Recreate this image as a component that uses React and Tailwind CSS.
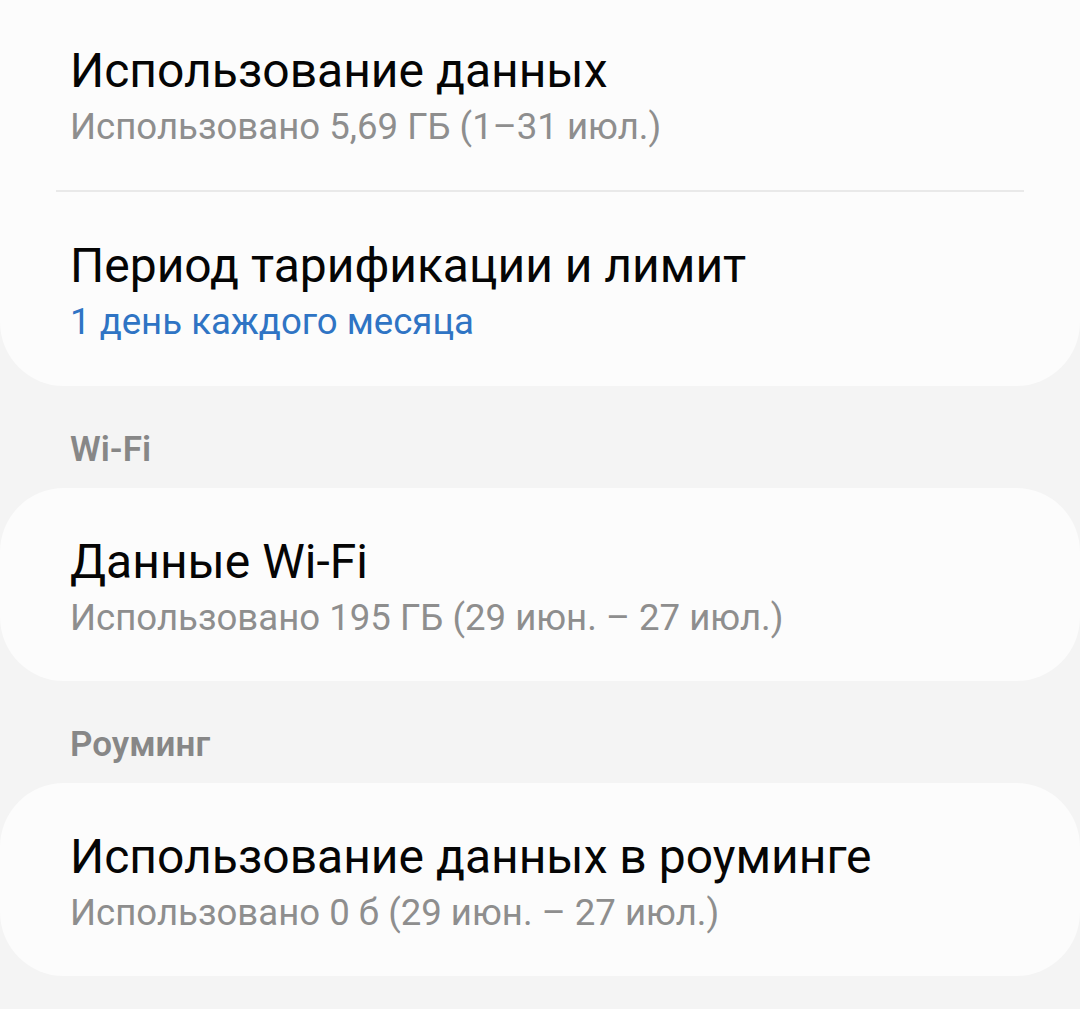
import React from "react";

const Item = ({ title, sub, blue }) => (
  <div className="px-[70px]">
    <div className="text-[48px] leading-[56px] text-[#050505]">{title}</div>
    <div className={"mt-[6px] text-[36.6px] leading-[44px] " + (blue ? "text-[#2f74c4]" : "text-[#8e8e8e]")}>{sub}</div>
  </div>
);

const Header = ({ children }) => (
  <div className="px-[70px] pt-[43px] pb-[17px] text-[35px] leading-[42px] font-semibold text-[#878787]">{children}</div>
);

export default function App() {
  return (
    <div className="min-h-screen bg-[#f4f4f4] font-['Roboto','Noto_Sans',sans-serif]">
      <div className="bg-[#fcfcfc] rounded-b-[64px] pt-[43px] pb-[42px]">
        <Item title="Использование данных" sub="Использовано 5,69 ГБ (1–31 июл.)" />
        <div className="mx-[56px] mt-[41px] mb-[46px] h-[2px] bg-[#e9e9e9]"></div>
        <Item title="Период тарификации и лимит" sub="1 день каждого месяца" blue />
      </div>

      <Header>Wi-Fi</Header>
      <div className="bg-[#fcfcfc] rounded-[64px] pt-[46px] pb-[41px]">
        <Item title="Данные Wi-Fi" sub="Использовано 195 ГБ (29 июн. – 27 июл.)" />
      </div>

      <Header>Роуминг</Header>
      <div className="bg-[#fcfcfc] rounded-[64px] pt-[46px] pb-[41px]">
        <Item title="Использование данных в роуминге" sub="Использовано 0 б (29 июн. – 27 июл.)" />
      </div>
    </div>
  );
}
